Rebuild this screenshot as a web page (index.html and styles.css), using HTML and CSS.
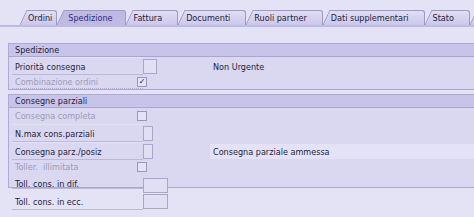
FILE: index.html
```html
<!DOCTYPE html>
<html lang="it">
<head>
  <meta charset="UTF-8">
  <title>Spedizione</title>
  <link rel="stylesheet" href="styles.css">
</head>
<body>
  <div class="tabbar">
    <div class="tab first"><span class="tab-label">Ordini</span></div>
    <div class="tab active"><span class="tab-label">Spedizione</span></div>
    <div class="tab"><span class="tab-label">Fattura</span></div>
    <div class="tab"><span class="tab-label">Documenti</span></div>
    <div class="tab"><span class="tab-label">Ruoli partner</span></div>
    <div class="tab"><span class="tab-label">Dati supplementari</span></div>
    <div class="tab"><span class="tab-label">Stato</span></div>
    <div class="tab stub"><span class="tab-label"></span></div>
  </div>

  <div class="panel">
    <section class="group g-sped">
      <div class="group-head">Spedizione</div>
      <div class="row row-18">
        <span class="lbl">Priorità consegna</span>
        <span class="ctl"><span class="box box-sq"></span></span>
        <span class="desc">Non Urgente</span>
      </div>
      <div class="row row-14">
        <span class="lbl off dotted">Combinazione ordini</span>
        <span class="ctl"><span class="chk">✓</span></span>
      </div>
    </section>

    <section class="group g-parz">
      <div class="group-head">Consegne parziali</div>
      <div class="row row-16">
        <span class="lbl off">Consegna completa</span>
        <span class="ctl"><span class="chk"></span></span>
      </div>
      <div class="row row-18">
        <span class="lbl">N.max cons.parziali</span>
        <span class="ctl"><span class="box box-nar"></span></span>
      </div>
      <div class="row row-18">
        <span class="lbl">Consegna parz./posiz</span>
        <span class="ctl"><span class="box box-nar"></span></span>
        <span class="desc hl">Consegna parziale ammessa</span>
      </div>
      <div class="row row-14">
        <span class="lbl off">Toller.&nbsp; illimitata</span>
        <span class="ctl"><span class="chk"></span></span>
      </div>
      <div class="row row-13">
        <span class="lbl plain">Toll. cons. in dif.</span>
        <span class="ctl"><span class="box box-wide drop"></span></span>
      </div>
    </section>

    <div class="row row-22 loose">
      <span class="lbl">Toll. cons. in ecc.</span>
      <span class="ctl"><span class="box box-wide"></span></span>
    </div>
  </div>
</body>
</html>
```

FILE: styles.css
```css
* { box-sizing: border-box; }

body {
  margin: 0;
  height: 217px;
  overflow: hidden;
  background: #e4e2f5;
  color: #1f1e3a;
  font-family: "DejaVu Sans Condensed", "Liberation Sans", sans-serif;
  font-size: 9px;
}

/* tab strip */
.tabbar {
  display: flex;
  align-items: flex-end;
  height: 27px;
  padding-left: 20px;
  border-bottom: 2px solid #bfbae3;
  overflow: hidden;
}

.tab {
  display: flex;
  height: 15px;
}

.tab::before {
  content: '';
  width: 7px;
  background:
    linear-gradient(to bottom right, #e4e2f5 calc(50% - 0.8px), #9e9ac8 50%, transparent calc(50% + 0.8px)),
    linear-gradient(#e0ddf3, #ccc8eb);
}

.tab-label {
  display: flex;
  align-items: center;
  padding: 0 15px 0 1px;
  border-top: 1px solid #9e9ac8;
  border-right: 1px solid #9e9ac8;
  border-top-right-radius: 3px;
  background: linear-gradient(#e0ddf3, #ccc8eb);
  white-space: nowrap;
}

.tab.first .tab-label { padding-right: 4px; }

.tab.active::before {
  background:
    linear-gradient(to bottom right, #e4e2f5 calc(50% - 0.8px), #9e9ac8 50%, transparent calc(50% + 0.8px)),
    #bfbae3;
}

.tab.active .tab-label {
  background: #bfbae3;
  color: #2b2d80;
  padding-right: 12px;
  padding-left: 4px;
}

.tab.stub .tab-label { padding: 0 4px; }

/* content */
.panel {
  padding-top: 16px;
}

.group {
  margin-left: 8px;
  border-left: 1px solid #aeaad4;
  border-bottom: 1px solid #aaa6d0;
  background: #dad7f1;
}

.g-parz { margin-top: 4px; }

.group-head {
  height: 14px;
  line-height: 12px;
  padding-left: 6px;
  background: #c8c4e9;
  border-top: 1px solid #aeaad4;
  border-bottom: 1px solid #aaa6d0;
}

.row {
  display: grid;
  grid-template-columns: 131px 67px 1fr;
  padding-left: 3px;
}

.row-13 { height: 13px; }
.row-14 { height: 14px; }
.row-16 { height: 16px; }
.row-18 { height: 18px; }
.row-22 { height: 22px; }

.loose { padding-left: 12px; }

.lbl {
  display: flex;
  align-items: center;
  padding-left: 3px;
  border-top: 1px solid #e3e1f5;
  border-bottom: 1px solid #bcb8dc;
  white-space: nowrap;
}

.row-18 .lbl { padding-top: 2px; }
.row-22 .lbl { padding-top: 6px; border-top-color: #bcb8dc; }

.lbl.off {
  color: #9d9bbb;
  border-color: transparent;
}

.lbl.dotted { border-bottom: 1px dotted #b3b0d3; }

.lbl.plain {
  border-top-color: transparent;
  border-bottom-color: transparent;
}

.ctl {
  display: flex;
  align-items: center;
}

.box {
  height: 15px;
  border: 1px solid #a9a6c9;
  background: #e1dff4;
}

.box-sq { width: 14px; align-self: flex-end; margin-bottom: 1px; }
.box-nar { width: 10px; align-self: flex-end; margin-bottom: 1px; }
.box-wide { width: 25px; align-self: flex-end; margin-bottom: 1px; }

.box.drop {
  align-self: flex-start;
  margin-top: 4px;
}

.chk {
  width: 10px;
  height: 10px;
  margin-left: -6px;
  border: 1px solid #9a97bb;
  background: #e4e2f6;
  font-family: "DejaVu Sans", sans-serif;
  font-size: 8px;
  font-weight: bold;
  line-height: 8px;
  text-align: center;
  color: #1a1a2a;
}

.desc {
  display: flex;
  align-items: center;
  padding-left: 3px;
  padding-top: 2px;
  white-space: nowrap;
}

.desc.hl {
  background: #e4e2f6;
  margin: 2px 0 1px;
  padding-top: 0;
}
```
